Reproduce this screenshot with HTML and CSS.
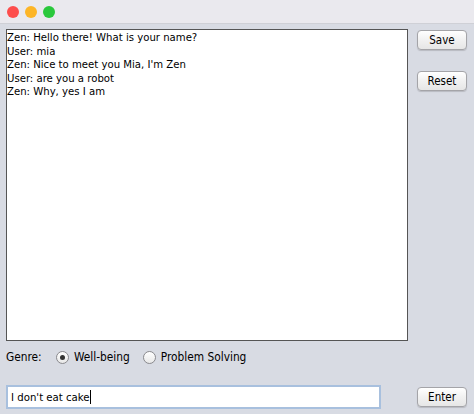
FILE: index.html
```html
<!DOCTYPE html>
<html>
<head>
<meta charset="utf-8">
<link rel="stylesheet" href="styles.css">
</head>
<body>
<div class="window">
  <div class="titlebar">
    <span class="light red"></span>
    <span class="light yellow"></span>
    <span class="light green"></span>
  </div>
  <div class="content">
    <div class="top">
      <div class="chat">
        <div>Zen: Hello there! What is your name?</div>
        <div>User: mia</div>
        <div>Zen: Nice to meet you Mia, I'm Zen</div>
        <div>User: are you a robot</div>
        <div>Zen: Why, yes I am</div>
      </div>
      <div class="side">
        <button class="btn">Save</button>
        <button class="btn">Reset</button>
      </div>
    </div>
    <div class="genre">
      <span class="label">Genre:</span>
      <span class="radio checked"></span><span class="opt">Well-being</span>
      <span class="radio"></span><span class="opt">Problem Solving</span>
    </div>
    <div class="bottom">
      <div class="input">I don't eat cake<span class="caret"></span></div>
      <button class="btn">Enter</button>
    </div>
  </div>
</div>
</body>
</html>
```

FILE: styles.css
```css
html, body {
  margin: 0;
  padding: 0;
}
body {
  width: 474px;
  height: 414px;
  overflow: hidden;
  font-family: "DejaVu Sans Condensed", "DejaVu Sans", sans-serif;
  font-size: 11px;
  color: #000;
}
.window {
  width: 474px;
  height: 414px;
  display: flex;
  flex-direction: column;
  background: #d8dbe3;
}
.titlebar {
  height: 24px;
  background: #eae9ee;
  border-bottom: 1px solid #cfd0d6;
  box-sizing: border-box;
  display: flex;
  align-items: center;
  gap: 6px;
  padding-left: 7px;
}
.light {
  width: 12px;
  height: 12px;
  border-radius: 50%;
  display: block;
}
.red { background: #fd4d4c; }
.yellow { background: #fdb526; }
.green { background: #2ac83c; }
.content {
  flex: 1;
  display: flex;
  flex-direction: column;
  padding: 5px 7px 0 6px;
}
.top {
  display: flex;
  gap: 9px;
}
.chat {
  width: 400px;
  height: 309px;
  background: #fff;
  border: 1px solid #555;
  padding: 1px 0 0 0;
  box-sizing: content-box;
  font-size: 11.25px;
  line-height: 13.5px;
}
.side {
  display: flex;
  flex-direction: column;
  gap: 21px;
  padding-top: 1px;
}
.btn {
  width: 50px;
  height: 20px;
  font-family: "DejaVu Sans Condensed", "DejaVu Sans", sans-serif;
  font-size: 11.5px;
  color: #000;
  background: linear-gradient(#ffffff, #f1f1f1 50%, #e6e6e6);
  border: 1px solid #a4a4a8;
  border-radius: 4px;
  box-shadow: 0 1px 1px rgba(0,0,0,0.15);
  padding: 0;
  margin: 0;
}
.genre {
  display: flex;
  align-items: center;
  height: 30px;
  margin-top: 1px;
  font-size: 11.8px;
}
.label {
  width: 50px;
  flex: none;
}
.radio {
  width: 11px;
  height: 11px;
  border-radius: 50%;
  border: 1px solid #8a8a8e;
  background: linear-gradient(#ffffff, #e8e8e8);
  margin-right: 5px;
  position: relative;
  flex: none;
}
.radio.checked::after {
  content: "";
  position: absolute;
  left: 3px;
  top: 3px;
  width: 5px;
  height: 5px;
  border-radius: 50%;
  background: #333;
}
.opt {
  margin-right: 13px;
}
.bottom {
  display: flex;
  align-items: center;
  gap: 36px;
  margin-top: 13px;
}
.input {
  width: 368px;
  height: 20px;
  background: #fff;
  border: 2px solid #a8c0de;
  padding-left: 3px;
  display: flex;
  align-items: center;
  box-sizing: content-box;
  font-size: 11.3px;
}
.caret {
  display: inline-block;
  width: 1px;
  height: 14px;
  background: #000;
}
```
